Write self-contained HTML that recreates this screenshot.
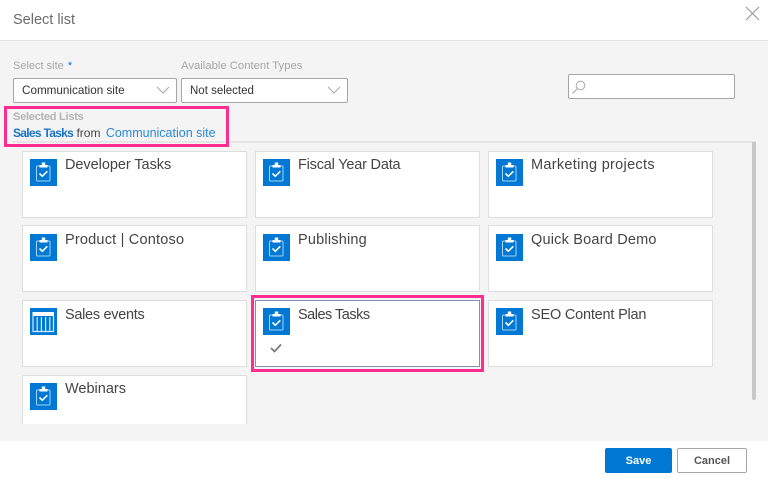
<!DOCTYPE html>
<html><head><meta charset="utf-8"><style>
html,body{margin:0;padding:0}
body{width:768px;height:481px;position:relative;overflow:hidden;background:#fff;font-family:"Liberation Sans",sans-serif;color:#444}
.a{position:absolute;white-space:nowrap}
.box{position:absolute;box-sizing:border-box;background:#fff;border:1px solid #a6a6a6;border-radius:2px;height:25px}
.card{position:absolute;box-sizing:border-box;width:225px;height:67px;background:#fff;border:1px solid #dedede}
.card svg{position:absolute;left:7px;top:7px}
.card span{position:absolute;left:42px;top:5px;font-size:14.5px;line-height:18px;color:#444;white-space:nowrap}
.card span.u{top:4px}
.pink{position:absolute;box-sizing:border-box;border:3px solid #ff2d8e}
</style></head><body>
<svg width="0" height="0" style="position:absolute"><defs>
<symbol id="t" viewBox="0 0 27 27"><rect width="27" height="27" fill="#0078d4"/><rect x="6.5" y="7" width="13.500" height="15" rx="1" fill="none" stroke="#a9d3f2"/><path d="M9.500 8.500V6h2.300V3.500h3.400V6h2.300v2.500z" fill="#fff"/><path d="M9.500 14.500l2.800 2.800 5-5" fill="none" stroke="#fff" stroke-width="1.600"/></symbol>
<symbol id="c" viewBox="0 0 27 27"><rect width="27" height="27" fill="#0078d4"/><rect x="2.500" y="4" width="21.500" height="4" fill="#fff"/><path d="M3 8v15.500h20.500V8M7.200 9v14M11.400 9v14M15.600 9v14M19.800 9v14" fill="none" stroke="#d6e9f8" stroke-width="1.200"/></symbol>
</defs></svg>
<div class="a" style="left:0;top:40px;width:768px;height:401px;background:#f4f4f4;border-top:1px solid #e3e3e3;box-sizing:border-box"></div>
<div class="a" style="left:13px;top:11px;font-size:14.500px;line-height:18px;color:#6b6b6b">Select list</div>
<svg class="a" style="left:745px;top:6px" width="15" height="15"><path d="M1 1l13 13M14 1L1 14" stroke="#9a9a9a" stroke-width="1.200" fill="none"/></svg>
<div class="a" style="left:13px;top:59px;font-size:11px;line-height:14px;color:#a6a6a6">Select site <span style="color:#0078d4;margin-left:1px">*</span></div>
<div class="a" style="left:181px;top:59px;font-size:11.300px;line-height:14px;color:#a6a6a6">Available Content Types</div>
<div class="box" style="left:13px;top:78px;width:164px"><span class="a" style="left:8px;top:5px;font-size:11.700px;line-height:14px;color:#333">Communication site</span><svg class="a" style="left:142px;top:7px" width="14" height="9"><path d="M1 1l6 6 6-6" fill="none" stroke="#a6a6a6"/></svg></div>
<div class="box" style="left:181px;top:78px;width:167px"><span class="a" style="left:8px;top:5px;font-size:11.500px;line-height:14px;color:#333">Not selected</span><svg class="a" style="left:145px;top:7px" width="14" height="9"><path d="M1 1l6 6 6-6" fill="none" stroke="#a6a6a6"/></svg></div>
<div class="box" style="left:568px;top:74px;width:167px"><svg class="a" style="left:2px;top:4px" width="16" height="16"><circle cx="9.500" cy="6.500" r="4.300" fill="none" stroke="#b0b0b0" stroke-width="1.100"/><path d="M6.500 9.500L1.500 14.500" stroke="#b0b0b0" stroke-width="1.200"/></svg></div>
<div class="a" style="left:13px;top:110px;font-size:11px;line-height:14px;font-weight:bold;color:#b4b4b4;letter-spacing:-.25px">Selected Lists</div>
<div class="a" style="left:13px;top:126px;font-size:12px;line-height:15px;color:#444"><span style="color:#1a73c8;font-weight:bold;letter-spacing:-.7px">Sales Tasks</span> from <span style="color:#2b88d8;font-size:12.500px;margin-left:2px">Communication site</span></div>
<div class="a" style="left:13px;top:141px;width:743px;height:2px;background:#e6e6e6"></div>
<div class="a" style="left:752px;top:142px;width:4px;height:258px;background:#c8c8c8;border-radius:0 0 2px 2px"></div>

<div class="card" style="left:22px;top:151px"><svg width="27" height="27"><use href="#t"/></svg><span class="u" style="letter-spacing:-.05px">Developer Tasks</span></div>
<div class="card" style="left:255px;top:151px"><svg width="27" height="27"><use href="#t"/></svg><span class="u" style="letter-spacing:-.2px">Fiscal Year Data</span></div>
<div class="card" style="left:488px;top:151px"><svg width="27" height="27"><use href="#t"/></svg><span class="u" style="letter-spacing:.3px">Marketing projects</span></div>
<div class="card" style="left:22px;top:225px"><svg width="27" height="27" style="top:8px"><use href="#t"/></svg><span style="letter-spacing:.2px">Product | Contoso</span></div>
<div class="card" style="left:255px;top:225px"><svg width="27" height="27" style="top:8px"><use href="#t"/></svg><span style="letter-spacing:.2px">Publishing</span></div>
<div class="card" style="left:488px;top:225px"><svg width="27" height="27" style="top:8px"><use href="#t"/></svg><span style="letter-spacing:.2px">Quick Board Demo</span></div>
<div class="card" style="left:22px;top:300px"><svg width="27" height="27"><use href="#c"/></svg><span style="letter-spacing:-.3px">Sales events</span></div>
<div class="card" style="left:255px;top:300px;border-color:#7f93ad"><svg width="27" height="27"><use href="#t"/></svg><span style="letter-spacing:-.5px">Sales Tasks</span><svg style="left:14px;top:42px" width="12" height="10"><path d="M1 5l3.500 3.500L11 1.500" fill="none" stroke="#7a7a7a" stroke-width="1.800"/></svg></div>
<div class="card" style="left:488px;top:300px"><svg width="27" height="27"><use href="#t"/></svg><span style="letter-spacing:-.2px">SEO Content Plan</span></div>
<div class="card" style="left:22px;top:375px;height:49px;border-bottom:0"><svg width="27" height="27"><use href="#t"/></svg><span class="u">Webinars</span></div>

<div class="pink" style="left:4px;top:106px;width:225px;height:41px"></div>
<div class="pink" style="left:251px;top:295px;width:233px;height:77px"></div>

<div class="a" style="left:605px;top:448px;width:67px;height:25px;background:#0078d4;border-radius:2px;color:#fff;font-size:11px;font-weight:bold;line-height:26px;text-align:center">Save</div>
<div class="a" style="left:677px;top:448px;width:70px;height:25px;box-sizing:border-box;background:#fff;border:1px solid #a6a6a6;border-radius:2px;color:#555;font-size:11px;font-weight:bold;line-height:24px;text-align:center">Cancel</div>
</body></html>
